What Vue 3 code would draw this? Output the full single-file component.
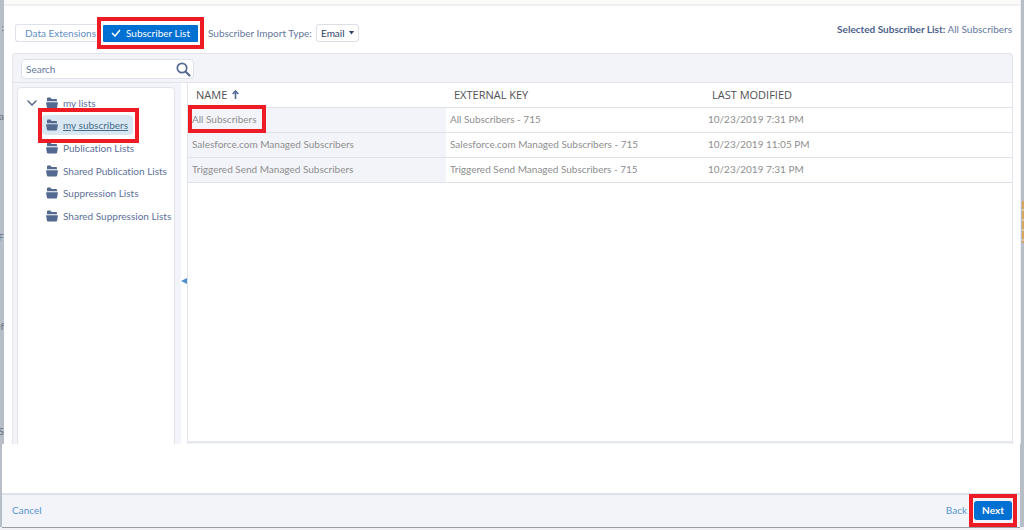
<script setup>
import { ref } from 'vue'

const search = ref('')
const importType = ref('Email')
const selected = ref('my subscribers')
const folders = ['my lists', 'my subscribers', 'Publication Lists', 'Shared Publication Lists', 'Suppression Lists', 'Shared Suppression Lists']
const rows = [
  { name: 'All Subscribers', key: 'All Subscribers - 715', modified: '10/23/2019 7:31 PM', marked: true },
  { name: 'Salesforce.com Managed Subscribers', key: 'Salesforce.com Managed Subscribers - 715', modified: '10/23/2019 11:05 PM' },
  { name: 'Triggered Send Managed Subscribers', key: 'Triggered Send Managed Subscribers - 715', modified: '10/23/2019 7:31 PM' },
]
</script>

<template>
  <div class="page">
    <div class="behind" aria-hidden="true">
      <span class="scrap s1">:</span>
      <span class="scrap s2">a</span>
      <span class="scrap s3">F</span>
      <span class="scrap s4">ef</span>
      <span class="scrap s5">S</span>
      <i class="swatch"></i>
    </div>
    <main class="content">
      <div class="topline"></div>
      <header class="toolbar">
        <button class="tab" type="button">Data Extensions</button>
        <span class="mark mark-tab">
          <button class="tab active" type="button">
            <svg width="10" height="8" viewBox="0 0 10 8"><path d="M1 4l3 3 5-6" fill="none" stroke="#fff" stroke-width="1.5" /></svg>
            Subscriber List
          </button>
        </span>
        <label class="type-label" for="type">Subscriber Import Type:</label>
        <span class="select">
          <select id="type" v-model="importType"><option>Email</option><option>Mobile</option></select>
          <svg width="5" height="4" viewBox="0 0 5 4"><path d="M0 0h5L2.500 3.500z" fill="#2f3f66" /></svg>
        </span>
        <p class="chosen"><b>Selected Subscriber List:</b> All Subscribers</p>
      </header>
      <section class="panel">
        <div class="searchbar">
          <div class="search">
            <input v-model="search" type="text" placeholder="Search" aria-label="Search" />
            <svg width="15" height="15" viewBox="0 0 15 15" fill="none" stroke="#53698f"><circle cx="6" cy="6" r="4.700" stroke-width="1.700" /><path d="M9.500 9.500l4 4" stroke-width="2.200" stroke-linecap="round" /></svg>
          </div>
        </div>
        <div class="body">
          <nav class="side">
            <ul class="tree">
              <li v-for="(folder, i) in folders" :key="folder">
                <svg class="chevron" width="10" height="6" viewBox="0 0 10 6"><path v-if="i === 0" d="M1 1l4 4 4-4" fill="none" stroke="#53698f" stroke-width="1.500" stroke-linecap="round" /></svg>
                <span :class="{ 'mark mark-tree': folder === 'my subscribers' }">
                  <a href="#" :class="{ on: folder === selected }" @click.prevent="selected = folder">
                    <svg width="12" height="12" viewBox="0 0 12 12" fill="#53698f"><path d="M1 4.300V1.500Q1 .5 2 .5h2.500l1 1.500H10q1 0 1 1v1.300z" /><path d="M.7 5.300h10.600q.7 0 .6.700l-.8 4.500q-.2 1-1.100 1H2q-.9 0-1.100-1L.1 6q-.1-.7.6-.7z" /></svg>
                    <span>{{ folder }}</span>
                  </a>
                </span>
              </li>
            </ul>
          </nav>
          <button class="splitter" type="button" aria-label="Collapse folders"><svg width="6" height="6" viewBox="0 0 6 6"><path d="M0 3l6-3v6z" fill="#4f8fd0" /></svg></button>
          <div class="grid">
            <table>
              <thead>
                <tr>
                  <th>NAME <svg width="7" height="9" viewBox="0 0 7 9"><path d="M3.500 9V1.500M.7 4l2.800-3 2.800 3" fill="none" stroke="#53698f" stroke-width="1.600" /></svg></th>
                  <th>EXTERNAL KEY</th>
                  <th>LAST MODIFIED</th>
                </tr>
              </thead>
              <tbody>
                <tr v-for="row in rows" :key="row.name">
                  <td><span :class="{ 'mark mark-cell': row.marked }">{{ row.name }}</span></td>
                  <td>{{ row.key }}</td>
                  <td>{{ row.modified }}</td>
                </tr>
              </tbody>
            </table>
          </div>
        </div>
      </section>
    </main>
    <div class="lower">
      <footer class="footer">
        <a href="#" @click.prevent>Cancel</a>
        <a class="back" href="#" @click.prevent>Back</a>
        <span class="mark mark-next"><button class="next" type="button">Next</button></span>
      </footer>
    </div>
  </div>
</template>

<style>
body { background: #f0f1f4; }
</style>

<style scoped>
* { box-sizing: border-box; }
.page { position: relative; display: flex; flex-direction: column; height: 100vh; padding-bottom: 2px; overflow: hidden; font: 10px/14px Lato, "Open Sans", sans-serif; font-variant-ligatures: none; color: #64779d; }
button, input, select { font: inherit; color: inherit; margin: 0; }
button { cursor: pointer; }
svg { flex: none; display: block; }
.behind { position: absolute; inset: 0 0 3px; background: #b7bec8; z-index: -1; }
.scrap { position: absolute; left: 0; color: #6c717b; direction: rtl; width: 4px; }
.s1 { top: 20px; } .s2 { top: 109px; } .s3 { top: 230px; } .s4 { top: 319px; } .s5 { top: 424px; }
.swatch { position: absolute; right: 0; top: 201px; width: 2px; height: 42px; background: repeating-linear-gradient(#d9a45c 0 8px, #ddc9ac 8px 10px); }
.content { flex: 1; min-height: 0; display: flex; flex-direction: column; margin: 0 3px 0 4px; background: #fff; border-right: 1px solid #eceef2; }
.topline { height: 6px; background: #fafaf9; border-bottom: 2px solid #eeeef3; }
.toolbar { height: 47px; padding: 6px 8px 0 11px; display: flex; align-items: center; }
.toolbar > * { flex: none; }
.tab { height: 18px; padding: 0 9px; border: 1px solid #dfe2ea; border-radius: 3px; background: #fff; color: #5f8dc4; white-space: nowrap; line-height: 14px; }
.toolbar > .tab { width: 84px; text-align: left; border-right: 0; }
.tab.active { display: flex; align-items: center; justify-content: center; gap: 5px; border: 0; border-radius: 1px; background: #0070d2; color: #fff; padding: 0; width: 95px; height: 17px; }
.mark { border: 4px solid #ed1c24; }
.mark-tab { margin-left: -2px; padding: 4px 2px 3px; position: relative; }
.type-label { margin-left: 4px; width: 105px; white-space: nowrap; }
.select { position: relative; margin-left: 3px; display: flex; align-items: center; }
.select select { appearance: none; width: 43px; height: 18px; padding: 0 4px; border: 1px solid #dddee6; border-radius: 3px; background: #fff; color: #2f3f66; }
.select svg { position: absolute; right: 5px; pointer-events: none; }
.chosen { margin: 0 0 8px auto; }
.chosen b { color: #4c628c; }
.panel { flex: 1; min-height: 0; display: flex; flex-direction: column; margin: 0 7px 0 8px; border: 1px solid #e2e4ea; border-bottom: 0; border-radius: 4px 4px 0 0; background: #f3f4f9; }
.searchbar { height: 29px; padding: 5px 8px 0; border-bottom: 1px solid #e2e4ea; }
.search { display: flex; align-items: center; width: 173px; height: 20px; padding: 0 2px 0 4px; border: 1px solid #dfe1e8; border-radius: 4px; background: #fff; }
.search input { flex: 1; min-width: 0; border: 0; outline: 0; padding: 0; background: none; }
.search input::placeholder { color: #64779d; opacity: 1; }
.body { flex: 1; min-height: 0; display: flex; }
.side { flex: none; width: 168px; padding: 4px 6px 0 4px; display: flex; }
.tree { flex: 1; min-width: 0; margin: 0; padding: 4px 0 0 9px; list-style: none; background: #fff; border: 1px solid #e2e4ea; border-bottom: 0; border-radius: 4px 4px 0 0; }
.tree li { display: flex; align-items: center; height: 22px; white-space: nowrap; }
.tree li:nth-child(even) { height: 23px; }
.tree li > span { margin-left: 5px; }
.tree a { display: flex; align-items: center; gap: 5px; height: 20px; padding: 0 4px; border-radius: 4px; color: #5d719a; text-decoration: none; }
.tree a.on { background: #d8e7f2; color: #456b88; text-decoration: underline; }
.tree li > .mark-tree { margin: 0 0 0 1px; padding: 3px 2px 3px 0; width: 101px; height: 35px; position: relative; }
.splitter { flex: none; width: 6px; padding: 35px 0 0; border: 0; background: #fff; }
.grid { flex: 1; background: #fff; border-left: 1px solid #e2e4ea; border-bottom: 2px solid #e6e9ee; margin-bottom: 1px; }
table { width: 100%; table-layout: fixed; border-collapse: separate; border-spacing: 0; text-align: left; }
th, td { padding: 0 4px; border-bottom: 1px solid #dfe1e8; width: 258px; white-space: nowrap; }
th:last-child { width: auto; }
th { height: 25px; padding: 0 8px; font: 11px/14px "Open Sans", sans-serif; color: #4f5052; }
th svg { display: inline-block; margin-left: 2px; }
td { height: 25px; padding-bottom: 3px; color: #8e8e8e; }
td:first-child { background: #f3f4f9; }
.mark-cell { position: relative; display: block; width: 78px; margin: -6px 0 -6px -4px; padding: 3px 0; text-indent: 0; }
.lower { height: 84px; margin: 0 4px 0 2px; display: flex; align-items: flex-end; background: #fff; border-bottom: 1px solid #989da5; }
.footer { flex: 1; height: 34px; display: flex; align-items: center; padding: 0 3px 2px 10px; background: #f3f4f9; border-top: 2px solid #dde1ea; }
.footer a { color: #5794cf; text-decoration: none; }
.back { margin-left: auto; }
.mark-next { margin-left: 2px; padding: 3px 1px; }
.next { display: block; width: 38px; height: 19px; padding: 0; border: 0; border-radius: 3px; background: #0070d2; color: #fff; font-weight: 700; }
</style>
